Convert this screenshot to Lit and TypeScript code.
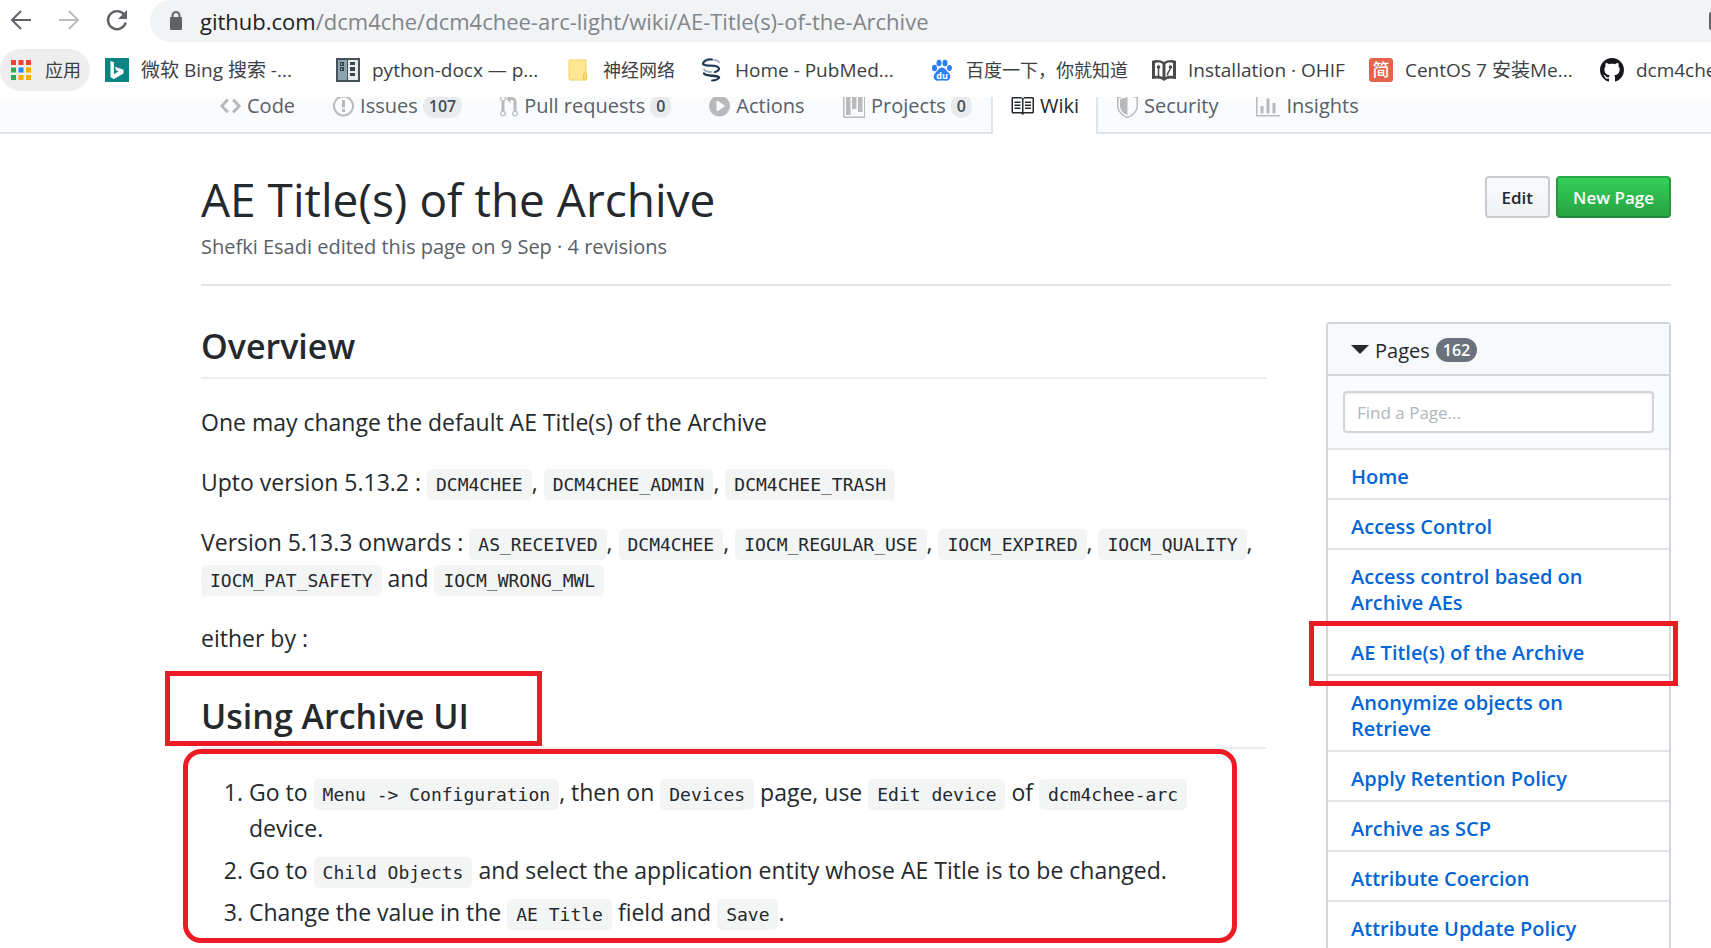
import { LitElement, html, css, svg, nothing } from "lit";
import { customElement } from "lit/decorators.js";
import { classMap } from "lit/directives/class-map.js";

type Glyph = { w: number; d: string };

const octicons: Record<string, Glyph> = {
  code: {
    w: 14,
    d: "M9.5 3L8 4.5 11.5 8 8 11.5 9.5 13 14 8 9.5 3zm-5 0L0 8l4.5 5L6 11.5 2.5 8 6 4.5 4.5 3z",
  },
  issue: {
    w: 14,
    d: "M7 2.3c3.14 0 5.7 2.56 5.7 5.7s-2.56 5.7-5.7 5.7A5.71 5.71 0 011.3 8c0-3.14 2.56-5.7 5.7-5.7zM7 1C3.14 1 0 4.14 0 8s3.14 7 7 7 7-3.14 7-7-3.14-7-7-7zm1 3H6v5h2V4zm0 6H6v2h2v-2z",
  },
  pull: {
    w: 12,
    d: "M11 11.28V5c-.03-.78-.34-1.47-.94-2.06C9.46 2.35 8.78 2.03 8 2H7V0L4 3l3 3V4h1c.27.02.48.11.69.31.21.2.3.42.31.69v6.28A1.993 1.993 0 0010 15a1.993 1.993 0 001-3.72zm-1 2.92c-.66 0-1.2-.55-1.2-1.2 0-.65.55-1.2 1.2-1.2.65 0 1.2.55 1.2 1.2 0 .65-.55 1.2-1.2 1.2zM4 3c0-1.11-.89-2-2-2a1.993 1.993 0 00-1 3.72v6.56A1.993 1.993 0 002 15a1.993 1.993 0 001-3.72V4.72c.59-.34 1-.98 1-1.72zm-.8 10c0 .66-.55 1.2-1.2 1.2-.65 0-1.2-.55-1.2-1.2 0-.65.55-1.2 1.2-1.2.65 0 1.2.55 1.2 1.2zM2 4.2C1.34 4.2.8 3.65.8 3c0-.65.55-1.2 1.2-1.2.65 0 1.2.55 1.2 1.2 0 .65-.55 1.2-1.2 1.2z",
  },
  play: {
    w: 14,
    d: "M14 8A7 7 0 110 8a7 7 0 0114 0zm-8.223 3.482l4.599-3.066a.5.5 0 000-.832L5.777 4.518A.5.5 0 005 4.934v6.132a.5.5 0 00.777.416z",
  },
  project: {
    w: 15,
    d: "M10 12h3V2h-3v10zm-4-2h3V2H6v8zm-4 4h3V2H2v12zm-1 1h13V1H1v14zM14 0H1a1 1 0 00-1 1v14a1 1 0 001 1h13a1 1 0 001-1V1a1 1 0 00-1-1z",
  },
  book: {
    w: 16,
    d: "M3 5h4v1H3V5zm0 3h4V7H3v1zm0 2h4V9H3v1zm11-5h-4v1h4V5zm0 2h-4v1h4V7zm0 2h-4v1h4V9zm2-6v9c0 .55-.45 1-1 1H9.5l-1 1-1-1H2c-.55 0-1-.45-1-1V3c0-.55.45-1 1-1h5.5l1 1 1-1H15c.55 0 1 .45 1 1zm-8 .5L7.5 3H2v9h6V3.5zm7-.5H9.5l-.5.5V12h6V3z",
  },
  shield: {
    w: 14,
    d: "M0 2l7-2 7 2v6.02C14 12.69 8.69 16 7 16c-1.69 0-7-3.31-7-7.98V2zm1 .75L7 1l6 1.75v5.268C13 12.104 8.449 15 7 15c-1.449 0-6-2.896-6-6.982V2.75zm1 .75L7 2v12c-1.207 0-5-2.482-5-5.985V3.5z",
  },
  graph: {
    w: 16,
    d: "M16 14v1H0V0h1v14h15zM5 13H3V8h2v5zm4 0H7V3h2v10zm4 0h-2V6h2v7z",
  },
};

const octicon = (name: string) => {
  const g = octicons[name];
  return html`<svg class="octicon" width=${g.w * 1.5} height="24" viewBox="0 0 ${g.w} 16" aria-hidden="true">
    <path fill-rule="evenodd" d=${g.d}></path>
  </svg>`;
};

const favicons: Record<string, unknown> = {
  bing: svg`<rect width="24" height="24" fill="#0c8484"/>
    <path d="M5.500 3l3.400 1.200v12.100l4.700-2.800-2.300-1.100-1.500-3.700 8.700 3.100v3.700l-9.600 5.600-3.400-1.900z" fill="#fff"/>`,
  docs: svg`<rect width="24" height="24" fill="#465158"/>
    <rect x="2" y="2" width="9" height="20" fill="#8ea3b0"/><rect x="12" y="2" width="10" height="20" fill="#e6ebee"/>
    <path d="M4 4h4v4H4zM4 9h4v4H4zM14 4h5v3h-5zM14 9h5v4h-5zM14 15h5v3h-5z" fill="#3b464d"/>
    <path d="M5 5h1v2H5zM5 10h1v2H5z" fill="#8ea3b0"/>`,
  folder: svg`<path d="M2 2h17v15h1v5H3a1 1 0 0 1-1-1z" fill="#ffe694"/>
    <path d="M19 17V2H2v19l1 1h15" fill="none" stroke="#f2d263" stroke-width="1"/>
    <path d="M16.500 22v-5.500a1.500 1.500 0 0 1 3 0v4.500a1 1 0 0 1-1 1z" fill="#fbdc6c" stroke="#eec643" stroke-width="1"/>`,
  pubmed: svg`<g fill="none" stroke-linecap="round">
    <path d="M4 6C4 3 8 1 13 1.500" stroke="#23405f" stroke-width="2.200"/>
    <path d="M4.500 6.500C9 9 19 6 20 10.500c0 2-2 3-4 3.500" stroke="#23405f" stroke-width="2.200"/>
    <path d="M15 2c3 0 4.500 1 5 2.500M13 14c-4 0-7-1-8-2.500" stroke="#8fa5bb" stroke-width="1.600"/>
    <path d="M5 15.500c3 3.500 13 1 15 4" stroke="#1d3350" stroke-width="2.400"/>
    <path d="M20 19.500c-1 2-4 3-7 3" stroke="#1d3350" stroke-width="1.800"/></g>`,
  baidu: svg`<g fill="#2b7ffb"><ellipse cx="4.500" cy="10" rx="2.500" ry="3.200"/><ellipse cx="9" cy="5" rx="2.500" ry="3.300"/>
    <ellipse cx="15" cy="5" rx="2.500" ry="3.300"/><ellipse cx="19.500" cy="10" rx="2.400" ry="3"/>
    <path d="M12 9.500c3 0 4 3 6.500 5.200 3.500 3.400 1.500 8.300-2.500 8-2.500-.3-5.500-.3-8 0-4 .3-6-4.600-2.500-8C8 12.500 9 9.500 12 9.500z"/></g>
    <text x="12" y="21" font-size="9" font-weight="700" font-family="Open Sans, sans-serif" text-anchor="middle" fill="#fff">du</text>`,
  ohif: svg`<path d="M0 3c4-2 9-1 12 1 3-2 8-3 12-1v18c-5-1-9-1-12 2-3-3-7-3-12-2z" fill="#4a4a48"/>
    <path d="M3 5c3-.8 5.500-.5 7.500 1v13C8 17.500 6 17.500 3 18zM21 5c-3-.8-5.500-.5-7.500 1v13c2.500-1.500 4.500-1.500 7.500-1z" fill="#fff"/>
    <path d="M6.500 18v-8M18.500 9c0 5-3 3-3 8.500" stroke="#4a4a48" stroke-width="1.500" fill="none"/>
    <circle cx="6.500" cy="9" r="1.800" fill="#4a4a48"/><circle cx="18.500" cy="9" r="1.800" fill="#4a4a48"/>`,
  jian: svg`<rect width="24" height="24" rx="3" fill="#e4634a"/>
    <text x="12" y="18" font-size="17" font-weight="500" font-family="Noto Sans CJK SC, sans-serif" text-anchor="middle" fill="#fff">简</text>`,
  github: svg`<path transform="scale(1.5)" fill-rule="evenodd" fill="#15171a" d="M8 0C3.580 0 0 3.580 0 8c0 3.540 2.290 6.530 5.470 7.590.4.070.55-.17.55-.38 0-.19-.01-.82-.01-1.490-2.010.37-2.530-.49-2.690-.94-.09-.23-.48-.94-.82-1.130-.28-.15-.68-.52-.01-.53.63-.01 1.080.58 1.230.82.72 1.210 1.870.87 2.330.66.070-.52.28-.87.51-1.070-1.780-.2-3.640-.89-3.640-3.950 0-.87.31-1.590.82-2.150-.08-.2-.36-1.020.08-2.120 0 0 .67-.21 2.200.82.64-.18 1.320-.27 2-.27.68 0 1.360.09 2 .27 1.530-1.040 2.200-.82 2.200-.82.44 1.100.16 1.920.08 2.120.51.56.82 1.270.82 2.150 0 3.070-1.870 3.750-3.650 3.950.29.25.54.73.54 1.480 0 1.070-.01 1.930-.01 2.200 0 .21.15.46.55.38A8.013 8.013 0 0016 8c0-4.420-3.580-8-8-8z"/>`,
};

const bookmarks = [
  { icon: "bing", text: "微软 Bing 搜索 -...", full: true },
  { icon: "docs", text: "python-docx — p...", full: true },
  { icon: "folder", text: "神经网络", cjk: true },
  { icon: "pubmed", text: "Home - PubMed...", full: true },
  { icon: "baidu", text: "百度一下，你就知道", cjk: true },
  { icon: "ohif", text: "Installation · OHIF" },
  { icon: "jian", text: "CentOS 7 安装Me...", full: true },
  { icon: "github", text: "dcm4che" },
];

const tabs: { icon: string; text: string; count?: number; current?: boolean }[] = [
  { icon: "code", text: "Code" },
  { icon: "issue", text: "Issues", count: 107 },
  { icon: "pull", text: "Pull requests", count: 0 },
  { icon: "play", text: "Actions" },
  { icon: "project", text: "Projects", count: 0 },
  { icon: "book", text: "Wiki", current: true },
  { icon: "shield", text: "Security" },
  { icon: "graph", text: "Insights" },
];

const pages = [
  "Home",
  "Access Control",
  "Access control based on Archive AEs",
  "AE Title(s) of the Archive",
  "Anonymize objects on Retrieve",
  "Apply Retention Policy",
  "Archive as SCP",
  "Attribute Coercion",
  "Attribute Update Policy",
];

const appDots = ["#f44336", "#f44336", "#f44336", "#34a853", "#1a8cff", "#fbab05", "#34a853", "#fbab05", "#fbab05"];

@customElement("browser-bar")
class BrowserBar extends LitElement {
  static styles = css`
    :host {
      display: block;
      background: #fff;
      font-family: "Open Sans", "Noto Sans CJK SC", sans-serif;
    }
    .toolbar {
      display: flex;
      height: 42px;
      align-items: center;
      overflow: hidden;
    }
    .nav {
      width: 48px;
      height: 40px;
      padding: 0;
      border: 0;
      background: none;
      display: flex;
      align-items: center;
      justify-content: center;
    }
    .navs {
      display: flex;
      padding-right: 9px;
      margin-left: -3px;
      padding-bottom: 2px;
    }
    .address {
      flex: 1;
      min-width: 0;
      height: 42px;
      display: flex;
      align-items: center;
      gap: 16px;
      padding-left: 18px;
      background: #f1f3f4;
      border-radius: 21px 0 0 21px;
      color: #80868b;
      font-size: 22px;
      line-height: 40px;
      white-space: nowrap;
    }
    .host {
      color: #202124;
    }
    .translate {
      width: 2px;
      height: 18px;
      margin-left: auto;
      border-radius: 2px 0 0 2px;
      background: #5f6368;
    }
    .bookmarks {
      display: flex;
      align-items: center;
      height: 55px;
      overflow: hidden;
      font-size: 19px;
      line-height: 42px;
      color: #3c4043;
      white-space: nowrap;
    }
    .apps {
      display: flex;
      align-items: center;
      flex: none;
      gap: 14px;
      width: 90px;
      height: 42px;
      margin-right: 15px;
      padding: 0 0 0 11px;
      border: 0;
      border-radius: 21px;
      background: #eee;
      font: inherit;
      font-size: 18px;
      color: #3c4043;
    }
    .mark {
      display: flex;
      align-items: center;
      flex: none;
      gap: 12px;
      padding-right: 24px;
      color: inherit;
      text-decoration: none;
    }
    .mark svg {
      flex: none;
    }
    .full {
      width: 231px;
      box-sizing: border-box;
    }
    .cjk {
      font-size: 18px;
    }
  `;

  render() {
    return html`
      <div class="toolbar">
        <div class="navs">
          <button class="nav" aria-label="Back">
            <svg width="24" height="24" viewBox="0 0 24 24" fill="none" stroke="#5f6368" stroke-width="2">
              <path d="M22 12H3M12 3l-9 9 9 9"></path>
            </svg>
          </button>
          <button class="nav" aria-label="Forward">
            <svg width="24" height="24" viewBox="0 0 24 24" fill="none" stroke="#babcbe" stroke-width="2">
              <path d="M2 12h19M12 3l9 9-9 9"></path>
            </svg>
          </button>
          <button class="nav" aria-label="Reload">
            <svg width="24" height="24" viewBox="0 0 24 24">
              <path d="M19 6.500A9 9 0 1 0 20.700 14.500" fill="none" stroke="#5f6368" stroke-width="2.400"></path>
              <path d="M22 2v9h-9z" fill="#5f6368"></path>
            </svg>
          </button>
        </div>
        <div class="address">
          <svg width="16" height="20" viewBox="0 0 16 20" aria-hidden="true">
            <rect x="2" y="6" width="12" height="13" rx="1" fill="#5f6368"></rect>
            <path d="M4.500 7V4.500a3.500 3.500 0 0 1 7 0V7" fill="none" stroke="#5f6368" stroke-width="2"></path>
          </svg>
          <span><span class="host">github.com</span>/dcm4che/dcm4chee-arc-light/wiki/AE-Title(s)-of-the-Archive</span>
          <span class="translate"></span>
        </div>
      </div>
      <div class="bookmarks">
        <button class="apps">
          <svg width="20" height="20" viewBox="0 0 20 20" aria-hidden="true">
            ${appDots.map(
              (c, i) => svg`<rect x=${(i % 3) * 7.5} y=${Math.floor(i / 3) * 7.5} width="5" height="5" fill=${c}/>`
            )}
          </svg>
          应用
        </button>
        ${bookmarks.map(
          (b) => html`<a class=${classMap({ mark: true, full: !!b.full, cjk: !!b.cjk })} href="#">
            <svg width="24" height="24" viewBox="0 0 24 24" aria-hidden="true">${favicons[b.icon]}</svg>
            <span>${b.text}</span>
          </a>`
        )}
      </div>
    `;
  }
}

@customElement("repo-tabs")
class RepoTabs extends LitElement {
  static styles = css`
    :host {
      display: block;
      font-family: "Open Sans", sans-serif;
    }
    .tabs {
      display: flex;
      height: 37px;
      padding-left: 201px;
      background: #fafbfc;
      box-shadow: inset 0 -2px #e1e4e8;
    }
    .tab {
      box-sizing: border-box;
      display: flex;
      align-items: center;
      flex: none;
      gap: 6px;
      height: 37px;
      padding: 0 17px 20px;
      border: solid transparent;
      border-width: 0 2px;
      color: #586069;
      font-size: 20px;
      line-height: 18px;
      text-decoration: none;
      white-space: nowrap;
    }
    .current {
      background: #fff;
      border-color: #e1e4e8;
      color: #24292e;
    }
    .octicon {
      flex: none;
      fill: #b7b9bb;
    }
    .current .octicon {
      fill: #24292e;
    }
    .count {
      margin-left: -1px;
      padding: 0 6px;
      border-radius: 12px;
      background: #e8eaeb;
      color: #444d56;
      font-size: 16px;
      font-weight: 600;
      line-height: 24px;
    }
  `;

  render() {
    return html`<nav class="tabs">
      ${tabs.map(
        (t) => html`<a class=${classMap({ tab: true, current: !!t.current })} href="#">
          ${octicon(t.icon)}<span>${t.text}</span>${t.count === undefined
            ? nothing
            : html`<span class="count">${t.count}</span>`}
        </a>`
      )}
    </nav>`;
  }
}

@customElement("pages-box")
class PagesBox extends LitElement {
  static styles = css`
    :host {
      display: block;
      box-sizing: border-box;
      border: 2px solid #d1d5da;
      border-radius: 4px;
      color: #24292e;
      font-family: "Open Sans", sans-serif;
    }
    .head {
      display: flex;
      align-items: center;
      gap: 6px;
      height: 48px;
      padding: 2px 0 0 23px;
      border-bottom: 2px solid #d1d5da;
      background: #f6f8fa;
      font-size: 20px;
      font-weight: 500;
    }
    .count {
      padding: 0 7px;
      border-radius: 12px;
      background: #6a737d;
      color: #fff;
      font-size: 16px;
      font-weight: 600;
      line-height: 24px;
    }
    .search {
      padding: 15px;
      border-bottom: 2px solid #e1e4e8;
      background: #fafbfc;
    }
    .find {
      display: block;
      box-sizing: border-box;
      width: 100%;
      height: 42px;
      padding: 0 12px;
      border: 2px solid #d1d5da;
      border-radius: 4px;
      box-shadow: inset 0 1px 2px rgba(27, 31, 35, 0.08);
      background: #fff;
      font: 17px "Open Sans", sans-serif;
    }
    .find::placeholder {
      color: #b0b6bc;
      opacity: 1;
    }
    .list {
      margin: 0;
      padding: 0;
      list-style: none;
    }
    .item {
      position: relative;
      padding: 14px 70px 8px 23px;
      border-bottom: 2px solid #e1e4e8;
      font-size: 20px;
      font-weight: 600;
      line-height: 26px;
    }
    .link {
      color: #0366d6;
      text-decoration: none;
    }
    .frame {
      position: absolute;
      z-index: 1;
      inset: -5px -9px -12px -19px;
      border: 5px solid #ed1c24;
      pointer-events: none;
    }
  `;

  render() {
    return html`
      <div class="head">
        <svg width="18" height="10" viewBox="0 0 18 10" aria-hidden="true"><path d="M0 0h18l-9 9z" fill="#24292e"></path></svg>
        <span>Pages</span><span class="count">162</span>
      </div>
      <div class="search"><input class="find" type="text" aria-label="Find a Page" placeholder="Find a Page..." /></div>
      <ul class="list">
        ${pages.map(
          (p, i) => html`<li class="item">
            <a class="link" href="#">${p}</a>${i === 3 ? html`<span class="frame"></span>` : nothing}
          </li>`
        )}
      </ul>
    `;
  }
}

@customElement("app-root")
class AppRoot extends LitElement {
  static styles = css`
    :host {
      display: flex;
      flex-direction: column;
      height: 100vh;
      overflow: hidden;
      background: #fff;
      color: #24292e;
      font-family: "Open Sans", sans-serif;
    }
    browser-bar,
    repo-tabs {
      flex: none;
    }
    browser-bar {
      z-index: 1;
    }
    .page {
      flex: 1;
      min-height: 0;
      overflow: hidden;
      padding: 35px 40px 0 201px;
    }
    .header {
      display: flex;
      justify-content: space-between;
      align-items: flex-start;
      padding-bottom: 19px;
      border-bottom: 2px solid #e1e4e8;
    }
    .title {
      margin: 0;
      font-size: 46px;
      font-weight: 400;
      line-height: 60px;
    }
    .meta {
      margin: 0;
      color: #586069;
      font-size: 20px;
      line-height: 36px;
    }
    .actions {
      display: flex;
      gap: 6px;
      padding-top: 7px;
    }
    .btn {
      box-sizing: border-box;
      height: 42px;
      padding: 0 15px;
      border: 2px solid #c8cbcf;
      border-radius: 4px;
      background: linear-gradient(#fafbfc, #eff3f6 90%);
      color: #24292e;
      font: 600 17px "Open Sans", sans-serif;
    }
    .primary {
      border-color: #28a745 #27983f #22863a;
      background: linear-gradient(#34d058, #28a745 90%);
      color: #fff;
    }
    .columns {
      display: grid;
      grid-template-columns: minmax(0, 1fr) 345px;
      gap: 60px;
      align-items: start;
      margin-top: 36px;
    }
    .heading {
      position: relative;
      margin: 36px 0 25px;
      padding-bottom: 7px;
      border-bottom: 2px solid #eaecef;
      font-size: 34px;
      font-weight: 600;
      line-height: 48px;
    }
    .heading:first-child {
      margin-top: 0;
    }
    .text {
      margin: 0 0 24px;
      font-size: 23px;
      line-height: 36px;
    }
    .steps {
      position: relative;
      margin: 0;
      padding-left: 48px;
      font-size: 23px;
      line-height: 36px;
    }
    .step + .step {
      margin-top: 6px;
    }
    code {
      padding: 5px 9px;
      border-radius: 5px;
      background: #f3f4f4;
      font-family: "DejaVu Sans Mono", monospace;
      font-size: 18px;
      line-height: 20px;
    }
    .frame {
      position: absolute;
      box-sizing: border-box;
      border: 5px solid #ed1c24;
      pointer-events: none;
    }
    .around-heading {
      top: -21px;
      bottom: 1px;
      left: -36px;
      width: 377px;
    }
    .around-steps {
      inset: -25px 29px -13px -18px;
      border-radius: 18px;
    }
  `;

  render() {
    return html`
      <browser-bar></browser-bar>
      <repo-tabs></repo-tabs>
      <main class="page">
        <header class="header">
          <div>
            <h1 class="title">AE Title(s) of the Archive</h1>
            <p class="meta">Shefki Esadi edited this page on 9 Sep · 4 revisions</p>
          </div>
          <div class="actions">
            <button class="btn">Edit</button>
            <button class="btn primary">New Page</button>
          </div>
        </header>
        <div class="columns">
          <article>
            <h2 class="heading">Overview</h2>
            <p class="text">One may change the default AE Title(s) of the Archive</p>
            <p class="text">
              Upto version 5.13.2 : <code>DCM4CHEE</code>, <code>DCM4CHEE_ADMIN</code>, <code>DCM4CHEE_TRASH</code>
            </p>
            <p class="text">
              Version 5.13.3 onwards : <code>AS_RECEIVED</code>, <code>DCM4CHEE</code>, <code>IOCM_REGULAR_USE</code>,
              <code>IOCM_EXPIRED</code>, <code>IOCM_QUALITY</code>, <code>IOCM_PAT_SAFETY</code> and
              <code>IOCM_WRONG_MWL</code>
            </p>
            <p class="text">either by :</p>
            <h2 class="heading">Using Archive UI<span class="frame around-heading"></span></h2>
            <ol class="steps">
              <li class="step">
                Go to <code>Menu -&gt; Configuration</code>, then on <code>Devices</code> page, use
                <code>Edit device</code> of <code>dcm4chee-arc</code> device.
              </li>
              <li class="step">
                Go to <code>Child Objects</code> and select the application entity whose AE Title is to be changed.
              </li>
              <li class="step">Change the value in the <code>AE Title</code> field and <code>Save</code>.</li>
              <span class="frame around-steps"></span>
            </ol>
          </article>
          <pages-box></pages-box>
        </div>
      </main>
    `;
  }
}
